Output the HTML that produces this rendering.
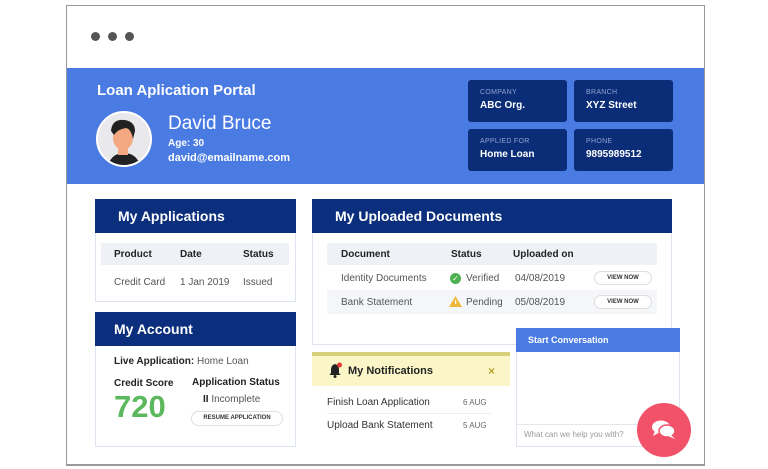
<!DOCTYPE html><html><head><style>
*{margin:0;padding:0;box-sizing:border-box}
body{width:768px;height:469px;background:#fff;font-family:"Liberation Sans",sans-serif;position:relative;overflow:hidden}
.a{position:absolute}
.card{background:#0b2d78;border-radius:3px;color:#fff}
.card .l{position:absolute;left:12px;top:9px;font-size:7px;color:#8ea2d0;letter-spacing:.3px}
.card .v{position:absolute;left:12px;top:20px;font-size:10px;font-weight:bold}
.hd{background:#0b2f7c;color:#fff;font-weight:bold;font-size:14px}
.pn{border:1px solid #dde3ef;background:#fff}
.t{font-size:10px;color:#555}
.b{font-weight:bold;color:#222}
.btn{border:1px solid #ddd;border-radius:9px;font-size:6px;font-weight:bold;color:#333;text-align:center;line-height:13px;background:#fff}
</style></head><body>
<div class="a" style="left:66px;top:5px;width:639px;height:461px;border:1px solid #999;border-bottom:2px solid #999"></div>
<div class="a" style="left:91px;top:32px;width:9px;height:9px;border-radius:50%;background:#555"></div>
<div class="a" style="left:108px;top:32px;width:9px;height:9px;border-radius:50%;background:#555"></div>
<div class="a" style="left:125px;top:32px;width:9px;height:9px;border-radius:50%;background:#555"></div>
<div class="a" style="left:67px;top:68px;width:637px;height:116px;background:#4a7be3"></div>
<div class="a" style="left:97px;top:82px;color:#fff;font-weight:bold;font-size:15px">Loan Aplication Portal</div>
<div class="a" style="left:96px;top:111px;width:56px;height:56px;border-radius:50%;background:#e9e9ec;border:2px solid #fff;overflow:hidden">
<svg width="52" height="52" viewBox="0 0 52 52"><path d="M10 52 Q14 40 26 40 Q38 40 42 52Z" fill="#222"/><rect x="20" y="32" width="10" height="10" fill="#f4a882"/><ellipse cx="25" cy="25" rx="10" ry="12" fill="#f4a882"/><path d="M13 18 Q14 6 26 7 Q37 8 37 18 L35 26 Q33 16 28 15 Q20 16 16 22Z" fill="#222"/></svg></div>
<div class="a" style="left:168px;top:113px;color:#fff;font-size:19px">David Bruce</div>
<div class="a" style="left:168px;top:138px;color:#fff;font-size:10px;font-weight:bold">Age: 30</div>
<div class="a" style="left:168px;top:152px;color:#fff;font-size:11px;font-weight:bold">david@emailname.com</div>
<div class="a card" style="left:468px;top:80px;width:99px;height:42px"><span class="l">COMPANY</span><span class="v">ABC Org.</span></div>
<div class="a card" style="left:574px;top:80px;width:99px;height:42px"><span class="l">BRANCH</span><span class="v">XYZ Street</span></div>
<div class="a card" style="left:468px;top:129px;width:99px;height:42px"><span class="l">APPLIED FOR</span><span class="v">Home Loan</span></div>
<div class="a card" style="left:574px;top:129px;width:99px;height:42px"><span class="l">PHONE</span><span class="v">9895989512</span></div>

<div class="a pn" style="left:95px;top:199px;width:201px;height:103px"></div>
<div class="a hd" style="left:95px;top:199px;width:201px;height:34px;padding:9px 0 0 23px">My Applications</div>
<div class="a" style="left:101px;top:243px;width:188px;height:22px;background:#eef2f7"></div>
<div class="a t b" style="left:114px;top:249px">Product</div><div class="a t b" style="left:180px;top:249px">Date</div><div class="a t b" style="left:243px;top:249px">Status</div>
<div class="a t" style="left:114px;top:277px">Credit Card</div><div class="a t" style="left:180px;top:277px">1 Jan 2019</div><div class="a t" style="left:243px;top:277px">Issued</div>

<div class="a pn" style="left:95px;top:312px;width:201px;height:135px"></div>
<div class="a hd" style="left:95px;top:312px;width:201px;height:34px;padding:9px 0 0 19px">My Account</div>
<div class="a t" style="left:114px;top:356px"><b style="color:#222">Live Application:</b> Home Loan</div>
<div class="a t b" style="left:114px;top:378px">Credit Score</div>
<div class="a" style="left:114px;top:389px;font-size:31px;font-weight:bold;color:#5cb85c">720</div>
<div class="a t b" style="left:192px;top:377px">Application Status</div>
<div class="a t" style="left:203px;top:394px"><b style="color:#222">II</b> Incomplete</div>
<div class="a btn" style="left:191px;top:411px;width:92px;height:15px;font-size:6px">RESUME APPLICATION</div>

<div class="a pn" style="left:312px;top:199px;width:360px;height:146px"></div>
<div class="a hd" style="left:312px;top:199px;width:360px;height:34px;padding:9px 0 0 23px">My Uploaded Documents</div>
<div class="a" style="left:327px;top:243px;width:330px;height:22px;background:#eef2f7"></div>
<div class="a" style="left:327px;top:290px;width:330px;height:24px;background:#f4f6f9"></div>
<div class="a t b" style="left:341px;top:249px">Document</div><div class="a t b" style="left:451px;top:249px">Status</div><div class="a t b" style="left:513px;top:249px">Uploaded on</div>
<div class="a t" style="left:341px;top:273px">Identity Documents</div>
<div class="a" style="left:450px;top:273px;width:11px;height:11px;border-radius:50%;background:#4cb050;color:#fff;font-size:8px;text-align:center;line-height:11px">✓</div>
<div class="a t" style="left:466px;top:273px">Verified</div><div class="a t" style="left:515px;top:273px">04/08/2019</div>
<div class="a btn" style="left:594px;top:271px;width:58px;height:14px">VIEW NOW</div>
<div class="a t" style="left:341px;top:297px">Bank Statement</div>
<svg class="a" style="left:449px;top:296px" width="13" height="11"><path d="M6.5 0L13 11H0Z" fill="#f0b93a"/><rect x="6" y="4" width="1.2" height="4" fill="#fff"/></svg>
<div class="a t" style="left:466px;top:297px">Pending</div><div class="a t" style="left:515px;top:297px">05/08/2019</div>
<div class="a btn" style="left:594px;top:295px;width:58px;height:14px">VIEW NOW</div>

<div class="a" style="left:312px;top:352px;width:198px;height:4px;background:#d8cf7a"></div>
<div class="a" style="left:312px;top:356px;width:198px;height:30px;background:#fbf6c8"></div>
<svg class="a" style="left:329px;top:362px" width="14" height="16" viewBox="0 0 14 16"><path d="M6 2 Q2 3 2 8 L2 11 L0.5 13 L11.5 13 L10 11 L10 8 Q10 3 6 2Z" fill="#222"/><circle cx="6" cy="14.5" r="1.5" fill="#222"/><circle cx="10.5" cy="3" r="2.5" fill="#e53935"/></svg>
<div class="a" style="left:348px;top:365px;font-size:11px;font-weight:bold;color:#222">My Notifications</div>
<div class="a" style="left:488px;top:364px;font-size:12px;font-weight:bold;color:#b8a530">×</div>
<div class="a t" style="left:327px;top:397px;color:#333">Finish Loan Application</div><div class="a" style="left:463px;top:398px;font-size:8px;color:#666">6 AUG</div>
<div class="a" style="left:327px;top:413px;width:164px;height:1px;background:#eee"></div>
<div class="a t" style="left:327px;top:420px;color:#333">Upload Bank Statement</div><div class="a" style="left:463px;top:421px;font-size:8px;color:#666">5 AUG</div>

<div class="a pn" style="left:516px;top:328px;width:164px;height:119px"></div>
<div class="a" style="left:516px;top:328px;width:164px;height:24px;background:#4a7be3;color:#fff;font-size:9px;font-weight:bold;padding:7px 0 0 12px">Start Conversation</div>
<div class="a" style="left:517px;top:424px;width:162px;height:1px;background:#e3e7ef"></div>
<div class="a" style="left:524px;top:430px;font-size:8px;color:#999">What can we help you with?</div>
<div class="a" style="left:637px;top:403px;width:54px;height:54px;border-radius:50%;background:#f2516a"></div>
<svg class="a" style="left:651px;top:419px" width="26" height="22" viewBox="0 0 26 22"><ellipse cx="10" cy="8" rx="9" ry="6.5" fill="#fff"/><path d="M4 12 L2 17 L9 13Z" fill="#fff"/><ellipse cx="16" cy="12" rx="8" ry="6" fill="#fff" stroke="#f2516a" stroke-width="1.5"/><path d="M20 16 L24 20 L17 17Z" fill="#fff"/></svg>
</body></html>
